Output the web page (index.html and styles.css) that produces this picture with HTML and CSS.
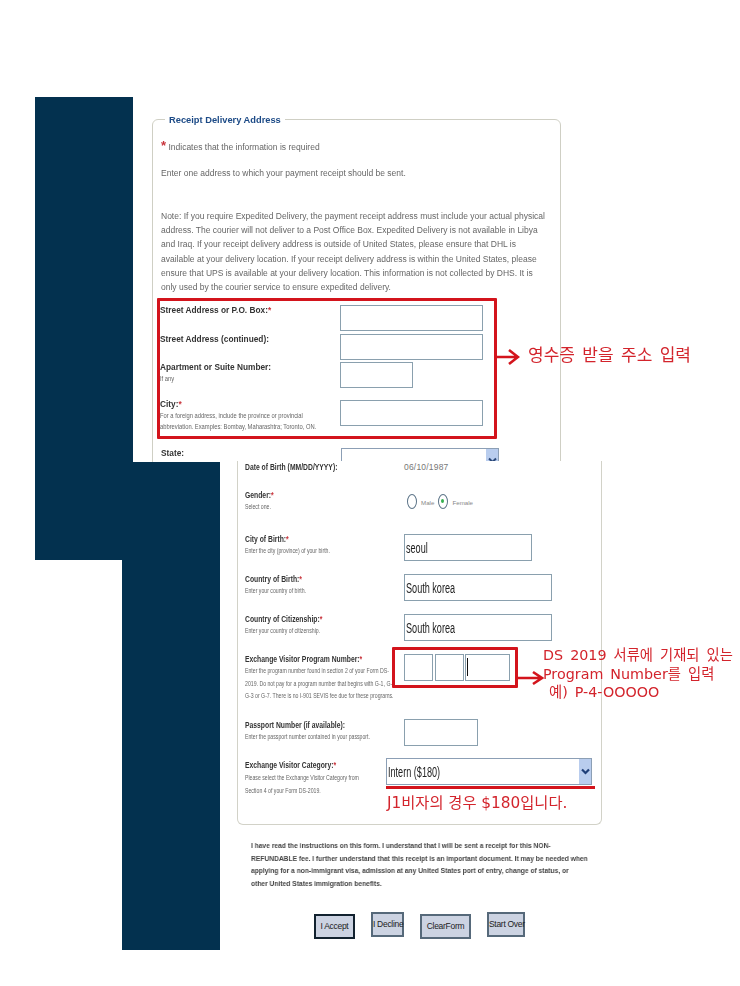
FILE: index.html
```html
<!DOCTYPE html>
<html lang="ko">
<head>
    <meta charset="UTF-8">
    <meta name="viewport" content="width=device-width, initial-scale=1.0">
    <title>Receipt Delivery Address</title>
    <link rel="stylesheet" href="styles.css">
</head>
<body>

    <div class="side side-top"></div>
    <div class="side side-mid"></div>
    <div class="side side-low"></div>

    <div class="shot shot-top">
        <div class="box box-top">
            <h3 class="legend">Receipt Delivery Address</h3>
            <p class="req"><span class="star">*</span> Indicates that the information is required</p>
            <p class="enter">Enter one address to which your payment receipt should be sent.</p>
            <p class="note">Note: If you require Expedited Delivery, the payment receipt address must include your actual physical<br>address. The courier will not deliver to a Post Office Box. Expedited Delivery is not available in Libya<br>and Iraq. If your receipt delivery address is outside of United States, please ensure that DHL is<br>available at your delivery location. If your receipt delivery address is within the United States, please<br>ensure that UPS is available at your delivery location. This information is not collected by DHS. It is<br>only used by the courier service to ensure expedited delivery.</p>

            <div class="addr">
                <div class="addr-row row-a">
                    <div class="lbl"><b>Street Address or P.O. Box:<span class="star">*</span></b></div>
                    <div class="field f-142"></div>
                </div>
                <div class="addr-row row-a">
                    <div class="lbl"><b>Street Address (continued):</b></div>
                    <div class="field f-142"></div>
                </div>
                <div class="addr-row row-b">
                    <div class="lbl"><b>Apartment or Suite Number:</b><small>If any</small></div>
                    <div class="field f-73"></div>
                </div>
                <div class="addr-row row-c">
                    <div class="lbl"><b>City:<span class="star">*</span></b><small>For a foreign address, include the province or provincial<br>abbreviation. Examples: Bombay, Maharashtra; Toronto, ON.</small></div>
                    <div class="field f-142"></div>
                </div>
            </div>

            <div class="state-row">
                <div class="lbl"><b>State:</b></div>
                <div class="field select f-157">
                    <span class="drop"><svg width="9" height="7" viewBox="0 0 9 7"><path d="M1 1.5 4.5 5 8 1.5" fill="none" stroke="#2c4a7a" stroke-width="2"/></svg></span>
                </div>
            </div>
        </div>
    </div>

    <div class="shot shot-low">
        <div class="box box-low">
            <div class="row r-dob">
                <div class="lbl"><b>Date of Birth (MM/DD/YYYY):</b></div>
                <div class="val">06/10/1987</div>
            </div>
            <div class="row r-gender">
                <div class="lbl"><b>Gender:<span class="star">*</span></b><small>Select one.</small></div>
                <div class="radios">
                    <span class="radio"></span><span class="radio-txt">Male</span>
                    <span class="radio on"></span><span class="radio-txt">Female</span>
                </div>
            </div>
            <div class="row r-city">
                <div class="lbl"><b>City of Birth:<span class="star">*</span></b><small>Enter the city (province) of your birth.</small></div>
                <div class="field f-128"><span class="squeeze">seoul</span></div>
            </div>
            <div class="row r-cob">
                <div class="lbl"><b>Country of Birth:<span class="star">*</span></b><small>Enter your country of birth.</small></div>
                <div class="field f-148"><span class="squeeze">South korea</span></div>
            </div>
            <div class="row r-coc">
                <div class="lbl"><b>Country of Citizenship:<span class="star">*</span></b><small>Enter your country of citizenship.</small></div>
                <div class="field f-148"><span class="squeeze">South korea</span></div>
            </div>
            <div class="row r-prog">
                <div class="lbl"><b>Exchange Visitor Program Number:<span class="star">*</span></b><small>Enter the program number found in section 2 of your Form DS-<br>2019. Do not pay for a program number that begins with G-1, G-<br>G-3 or G-7. There is no I-901 SEVIS fee due for these programs.</small></div>
                <div class="prog">
                    <div class="field f-28"></div>
                    <div class="field f-28"></div>
                    <div class="field f-44"><span class="caret"></span></div>
                </div>
            </div>
            <div class="row r-pass">
                <div class="lbl"><b>Passport Number (if available):</b><small>Enter the passport number contained in your passport.</small></div>
                <div class="field f-74"></div>
            </div>
            <div class="row r-cat">
                <div class="lbl"><b>Exchange Visitor Category:<span class="star">*</span></b><small>Please select the Exchange Visitor Category from<br>Section 4 of your Form DS-2019.</small></div>
                <div class="field select f-205"><span class="squeeze">Intern ($180)</span>
                    <span class="drop"><svg width="9" height="7" viewBox="0 0 9 7"><path d="M1 1.5 4.5 5 8 1.5" fill="none" stroke="#1f3f78" stroke-width="2.2"/></svg></span>
                </div>
            </div>
        </div>

        <p class="agree">I have read the instructions on this form. I understand that I will be sent a receipt for this NON-<br>REFUNDABLE fee. I further understand that this receipt is an important document. It may be needed when<br>applying for a non-immigrant visa, admission at any United States port of entry, change of status, or<br>other United States immigration benefits.</p>

        <div class="buttons">
            <button class="btn btn-accept">I Accept</button>
            <button class="btn btn-decline">I Decline</button>
            <button class="btn btn-clear">ClearForm</button>
            <button class="btn btn-start">Start Over</button>
        </div>
    </div>

    <!-- red notes drawn over the screenshots -->
    <div class="mark mark-addr"></div>
    <svg class="arrow arrow-addr" width="23" height="18" viewBox="0 0 23 18"><path d="M0 9H20M12 2 21 9 12 16" fill="none" stroke="#d3141c" stroke-width="2.6"/></svg>
    <div class="note-red note-addr">영수증 받을 주소 입력</div>

    <div class="mark mark-prog"></div>
    <svg class="arrow arrow-prog" width="26" height="16" viewBox="0 0 26 16"><path d="M0 8H23M15 2 24 8 15 14" fill="none" stroke="#d3141c" stroke-width="2.6"/></svg>
    <div class="note-red note-prog">DS 2019 서류에 기재되 있는<br>Program Number를 입력<br><span class="indent">예) P-4-OOOOO</span></div>

    <div class="line-cat"></div>
    <div class="note-red note-cat">J1비자의 경우 $180입니다.</div>

</body>
</html>
```

FILE: styles.css
```css
* {
    box-sizing: border-box;
}

html, body {
    margin: 0;
    height: 986px;
    overflow: hidden;
}

body {
    position: relative;
    background-color: #ffffff;
    color: #555;
    font-family: 'Liberation Sans', Arial, sans-serif;
}

/* navy bars of the two pasted screenshots */
.side {
    position: absolute;
    background-color: #03314f;
}

.side-top {
    left: 35px;
    top: 97px;
    width: 98px;
    height: 365px;
}

.side-mid {
    left: 35px;
    top: 462px;
    width: 185px;
    height: 98px;
}

.side-low {
    left: 122px;
    top: 560px;
    width: 98px;
    height: 390px;
}

.shot {
    position: absolute;
    filter: blur(0.4px);
}

.shot-top {
    left: 133px;
    top: 97px;
    width: 440px;
    height: 365px;
    overflow: hidden;
}

.shot-low {
    left: 220px;
    top: 462px;
    width: 400px;
    height: 488px;
    background-color: #fff;
}

.box {
    position: relative;
    border: 1px solid #cfcfc4;
    background-color: #fff;
}

.box-top {
    margin: 22px 0 0 19px;
    width: 409px;
    height: 360px;
    border-radius: 6px 6px 0 0;
    padding: 0 8px;
}

.legend {
    position: absolute;
    left: 12px;
    top: -6px;
    margin: 0;
    padding: 0 4px;
    background-color: #fff;
    color: #1c4a86;
    font-size: 9.3px;
    line-height: 13px;
}

p {
    margin: 0;
}

.req, .enter, .note {
    font-size: 8.5px;
    color: #666;
}

.req {
    padding-top: 19px;
    line-height: 13px;
}

.enter {
    padding-top: 13px;
    line-height: 13px;
}

.note {
    padding-top: 29px;
    line-height: 14.2px;
    white-space: nowrap;
}

.star {
    color: #c8343c;
}

.req .star {
    font-size: 13px;
    font-weight: bold;
}

.lbl {
    width: 180px;
    flex: none;
}

.lbl b {
    display: block;
    font-size: 8.3px;
    line-height: 12px;
    color: #333;
    white-space: nowrap;
}

.lbl small {
    display: block;
    font-size: 6.6px;
    line-height: 11px;
    color: #666;
    white-space: nowrap;
    transform: scaleX(0.88);
    transform-origin: left center;
}

.field {
    position: relative;
    height: 26px;
    border: 1.5px solid #8aa0ae;
    background-color: #fff;
    color: #222;
    font-size: 14px;
    line-height: 27px;
    padding-left: 1px;
    flex: none;
}

/* the typed values are tall and narrow in the reference */
.squeeze {
    display: inline-block;
    transform: scaleX(0.65);
    transform-origin: left center;
}

.addr {
    margin: 4px 0 0 -1px;
    padding-top: 7px;
}

.addr-row, .state-row, .row {
    display: flex;
}

.addr .lbl {
    margin-top: -1px;
}

.row-a {
    height: 28.5px;
}

.row-b {
    height: 37.5px;
}

.row-c {
    height: 42px;
}

.addr .row-c .lbl {
    margin-top: -2px;
}

.state-row {
    margin-top: 6px;
}

.state-row .lbl {
    margin-top: -1px;
}

.f-142 { width: 143px; }
.f-73 { width: 73px; }
.f-157 { width: 158px; }
.f-128 { width: 128px; }
.f-148 { width: 148px; }
.f-74 { width: 74px; }
.f-28 { width: 29px; }
.f-44 { width: 45px; }

.select {
    border-color: #8c9fb5;
}

.drop {
    position: absolute;
    right: 0;
    top: 0;
    bottom: 0;
    width: 12px;
    display: flex;
    align-items: center;
    justify-content: center;
    background-color: #b9cdee;
}

/* lower form */
.box-low {
    margin-left: 17px;
    width: 365px;
    height: 364px;
    border-top: 0;
    border-color: #d2d2c8;
    border-radius: 0 0 6px 6px;
    padding: 0 7px;
}

.box-low .lbl {
    width: 159px;
}

.box-low .lbl b {
    font-size: 8.6px;
    transform: scaleX(0.79);
    transform-origin: left center;
}

.box-low .lbl small {
    font-size: 7px;
    transform: scaleX(0.74);
}

.r-dob { height: 28px; margin-top: -1px; }
.r-gender { height: 44px; }
.r-city { height: 40px; }
.r-cob { height: 40px; }
.r-coc { height: 40px; }
.r-prog { height: 66px; }
.r-pass { height: 40px; }
.r-cat { height: 60px; }

.val {
    font-size: 8.5px;
    line-height: 12px;
    color: #777;
    letter-spacing: 0.2px;
}

.radios {
    display: flex;
    align-items: center;
    height: 18px;
    margin-top: 3px;
    padding-left: 3px;
}

.radio {
    width: 10px;
    height: 15px;
    border: 1.5px solid #5c7488;
    border-radius: 50%;
    position: relative;
}

.radio.on {
    margin-left: -1px;
}

.radio.on::after {
    content: "";
    position: absolute;
    left: 2px;
    top: 4px;
    width: 3px;
    height: 4px;
    border-radius: 50%;
    background-color: #35b04f;
}

.radio-txt {
    font-size: 6.2px;
    color: #888;
    margin: 3px 5px 0 4px;
}

.r-city .field, .r-cob .field, .r-coc .field {
    height: 27px;
    margin-top: 1px;
}

.r-prog .lbl small {
    line-height: 12.5px;
}

.prog {
    display: flex;
    gap: 1.5px;
    margin-top: 1px;
}

.prog .field {
    height: 27px;
}

.caret {
    position: absolute;
    left: 1px;
    top: 3px;
    width: 1px;
    height: 18px;
    background-color: #111;
}

.r-cat .lbl {
    width: 141px;
}

.r-cat .lbl small {
    line-height: 13px;
}

.f-205 {
    width: 206px;
    height: 27px;
    margin-top: -1px;
    font-size: 14px;
    white-space: nowrap;
}

.r-pass .field {
    height: 27px;
}

.agree {
    margin: 15px 0 0 31px;
    font-size: 7.6px;
    font-weight: bold;
    line-height: 12.7px;
    color: #444;
    white-space: nowrap;
    transform: scaleX(0.88);
    transform-origin: left center;
    will-change: transform;
}

.buttons {
    position: relative;
    height: 40px;
    margin-top: 12px;
}

.btn {
    position: absolute;
    padding: 0;
    border: 2px solid #56697a;
    background-color: #ccd3e2;
    color: #222;
    font-family: 'Liberation Sans', Arial, sans-serif;
    font-size: 8.5px;
    letter-spacing: -0.3px;
    white-space: nowrap;
}

.btn-accept { left: 94px; top: 11px; width: 41px; height: 25px; border-color: #12222f; }
.btn-decline { left: 151px; top: 9px; width: 33px; height: 25px; }
.btn-clear { left: 200px; top: 11px; width: 51px; height: 25px; }
.btn-start { left: 267px; top: 9px; width: 38px; height: 25px; }

/* red marks */
.mark {
    position: absolute;
    border: 3px solid #d3141c;
    border-radius: 1px;
}

.mark-addr {
    left: 157px;
    top: 298px;
    width: 340px;
    height: 141px;
}

.mark-prog {
    left: 392px;
    top: 647px;
    width: 126px;
    height: 41px;
}

.arrow {
    position: absolute;
}

.arrow-addr {
    left: 497px;
    top: 348px;
}

.arrow-prog {
    left: 518px;
    top: 670px;
}

.note-red {
    position: absolute;
    color: #d3242c;
    font-family: 'DejaVu Sans', 'Noto Sans CJK KR', sans-serif;
    white-space: nowrap;
    filter: blur(0.3px);
}

.note-addr {
    left: 528px;
    top: 343px;
    font-size: 17px;
    line-height: 24px;
    word-spacing: 2px;
}

.note-prog {
    left: 543px;
    top: 646px;
    font-size: 14.3px;
    line-height: 18.5px;
    word-spacing: 2.5px;
}

.indent {
    padding-left: 6px;
}

.line-cat {
    position: absolute;
    left: 386px;
    top: 786px;
    width: 209px;
    height: 3px;
    background-color: #d3141c;
}

.note-cat {
    left: 387px;
    top: 792px;
    font-size: 15.3px;
    line-height: 22px;
}
```
